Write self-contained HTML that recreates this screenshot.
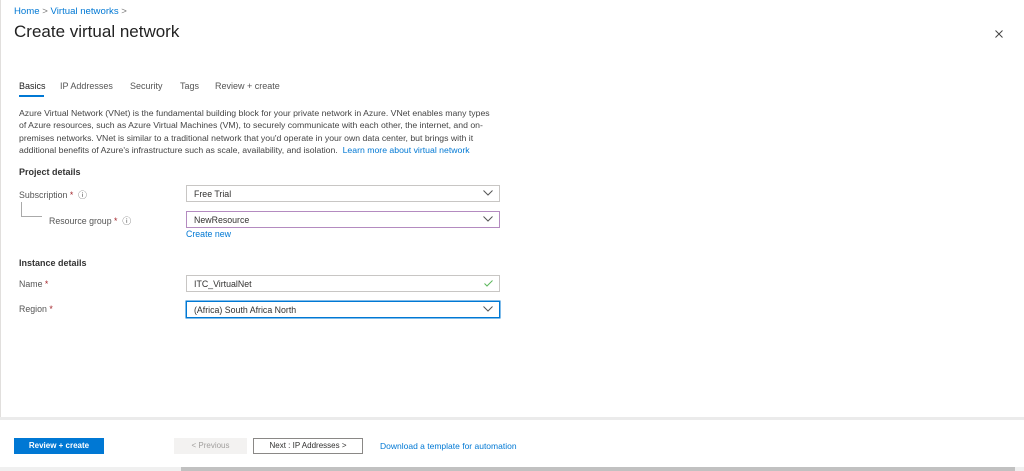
<!DOCTYPE html>
<html><head><meta charset="utf-8"><style>
*{margin:0;padding:0;box-sizing:border-box}
body{width:1024px;height:471px;background:#fff;font-family:"Liberation Sans",sans-serif;position:relative;overflow:hidden;color:#323130}
.a{position:absolute;white-space:nowrap}
.l{color:#0078d4}
.s{font-size:8.8px}
.box{position:absolute;left:186px;width:314px;height:17px;border:1px solid #c8c6c4;font-size:8.8px;padding:3px 0 0 7px;color:#323130}
.chev{position:absolute;right:6px;top:4px}
.req{color:#a4262c}
</style></head><body>
<div class="a" style="left:0;top:0;width:1px;height:417px;background:#e1dfdd"></div>
<div class="a" style="left:14px;top:6px;font-size:9.6px;color:#0078d4">Home <span style="color:#777">&gt;</span> Virtual networks <span style="color:#777">&gt;</span></div>
<div class="a" style="left:14px;top:22px;font-size:17px;color:#222">Create virtual network</div>
<svg class="a" style="left:995px;top:30px" width="8" height="8"><path d="M0.5 0.5L7.5 7.5M7.5 0.5L0.5 7.5" stroke="#444" stroke-width="1"/></svg>
<div class="a" style="left:19px;top:81px;font-size:9px;color:#222">Basics</div>
<div class="a" style="left:19px;top:95px;width:25px;height:2px;background:#0078d4"></div>
<div class="a" style="left:60px;top:81px;font-size:9px;color:#555">IP Addresses</div>
<div class="a" style="left:130px;top:81px;font-size:9px;color:#555">Security</div>
<div class="a" style="left:180px;top:81px;font-size:9px;color:#555">Tags</div>
<div class="a" style="left:215px;top:81px;font-size:9px;color:#555">Review + create</div>
<div class="a" style="left:19px;top:107px;line-height:12.3px;font-size:8.7px;color:#444">Azure Virtual Network (VNet) is the fundamental building block for your private network in Azure. VNet enables many types<br>of Azure resources, such as Azure Virtual Machines (VM), to securely communicate with each other, the internet, and on-<br>premises networks. VNet is similar to a traditional network that you'd operate in your own data center, but brings with it<br>additional benefits of Azure's infrastructure such as scale, availability, and isolation. &nbsp;<span class="l">Learn more about virtual network</span></div>
<div class="a" style="left:19px;top:167px;font-size:9px;font-weight:bold;color:#333">Project details</div>
<div class="a s" style="left:19px;top:188px;color:#555">Subscription <span class="req">*</span> &nbsp;ⓘ</div>
<div class="a" style="left:21px;top:202px;width:1px;height:14px;background:#aaa"></div>
<div class="a" style="left:21px;top:216px;width:21px;height:1px;background:#aaa"></div>
<div class="a s" style="left:49px;top:214px;color:#555">Resource group <span class="req">*</span> &nbsp;ⓘ</div>
<div class="box" style="top:185px">Free Trial<svg class="chev" width="10" height="6"><path d="M0.5 0.5L5 5L9.5 0.5" fill="none" stroke="#555"/></svg></div>
<div class="box" style="top:211px;border-color:#b48bc0">NewResource<svg class="chev" width="10" height="6"><path d="M0.5 0.5L5 5L9.5 0.5" fill="none" stroke="#555"/></svg></div>
<div class="a s l" style="left:186px;top:229px">Create new</div>
<div class="a" style="left:19px;top:258px;font-size:9px;font-weight:bold;color:#333">Instance details</div>
<div class="a s" style="left:19px;top:279px;color:#555">Name <span class="req">*</span></div>
<div class="a s" style="left:19px;top:304px;color:#555">Region <span class="req">*</span></div>
<div class="box" style="top:275px">ITC_VirtualNet<svg class="chev" width="9" height="7"><path d="M0.5 3.5L3 6L8.5 0.5" fill="none" stroke="#5cb85c"/></svg></div>
<div class="box" style="top:301px;border:1px solid #0078d4;box-shadow:0 0 0 0.5px #0078d4">(Africa) South Africa North<svg class="chev" width="10" height="6"><path d="M0.5 0.5L5 5L9.5 0.5" fill="none" stroke="#555"/></svg></div>
<div class="a" style="left:0;top:417px;width:1024px;height:3px;background:#ebebeb"></div>
<div class="a" style="left:14px;top:438px;width:90px;height:16px;background:#0078d4;color:#fff;font-size:8px;font-weight:bold;text-align:center;line-height:16px">Review + create</div>
<div class="a" style="left:174px;top:438px;width:73px;height:16px;background:#f3f2f1;color:#a19f9d;font-size:8px;text-align:center;line-height:16px">&lt; Previous</div>
<div class="a" style="left:253px;top:438px;width:110px;height:16px;border:1px solid #8a8886;color:#323130;font-size:8px;text-align:center;line-height:14px">Next : IP Addresses &gt;</div>
<div class="a l" style="left:380px;top:441px;font-size:8.5px">Download a template for automation</div>
<div class="a" style="left:0;top:467px;width:1024px;height:4px;background:#f0f0f0"></div>
<div class="a" style="left:181px;top:467px;width:834px;height:4px;background:#c1c1c1"></div>
</body></html>
